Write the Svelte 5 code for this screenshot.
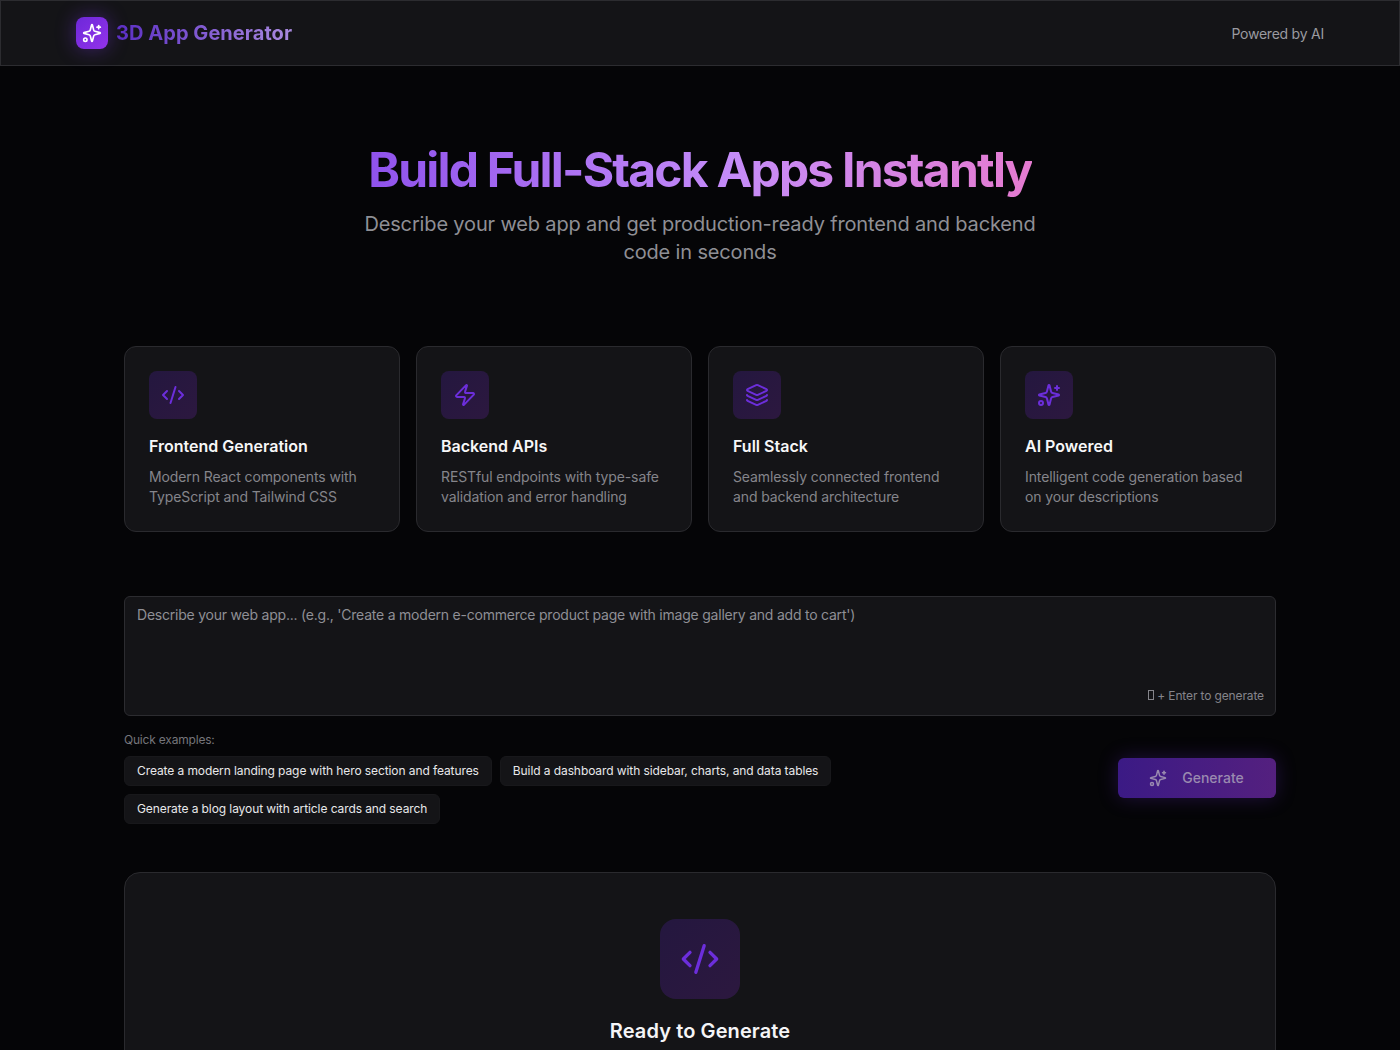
<script>
  const features = [
    { icon: 'code', title: 'Frontend Generation', text: ['Modern React components with', 'TypeScript and Tailwind CSS'] },
    { icon: 'zap', title: 'Backend APIs', text: ['RESTful endpoints with type-safe', 'validation and error handling'] },
    { icon: 'layers', title: 'Full Stack', text: ['Seamlessly connected frontend', 'and backend architecture'] },
    { icon: 'sparkles', title: 'AI Powered', text: ['Intelligent code generation based', 'on your descriptions'] },
  ]
  const examples = [
    'Create a modern landing page with hero section and features',
    'Build a dashboard with sidebar, charts, and data tables',
    'Generate a blog layout with article cards and search',
  ]
</script>

{#snippet icon(name, size)}
  <svg width={size} height={size} viewBox="0 0 24 24" fill="none" stroke="currentColor" stroke-width="2" stroke-linecap="round" stroke-linejoin="round">
    {#if name === 'code'}
      <path d="m18 16 4-4-4-4" /><path d="m6 8-4 4 4 4" /><path d="m14.5 4-5 16" />
    {:else if name === 'zap'}
      <path d="M4 14a1 1 0 0 1-.78-1.63l9.9-10.2a.5.5 0 0 1 .86.46l-1.92 6.02A1 1 0 0 0 13 10h7a1 1 0 0 1 .78 1.63l-9.9 10.2a.5.5 0 0 1-.86-.46l1.92-6.02A1 1 0 0 0 11 14z" />
    {:else if name === 'layers'}
      <path d="M12.83 2.18a2 2 0 0 0-1.66 0L2.6 6.08a1 1 0 0 0 0 1.83l8.58 3.91a2 2 0 0 0 1.66 0l8.58-3.9a1 1 0 0 0 0-1.83z" />
      <path d="M2 12a1 1 0 0 0 .58.91l8.6 3.91a2 2 0 0 0 1.65 0l8.58-3.9A1 1 0 0 0 22 12" />
      <path d="M2 17a1 1 0 0 0 .58.91l8.6 3.91a2 2 0 0 0 1.65 0l8.58-3.9A1 1 0 0 0 22 17" />
    {:else}
      <path d="M9.937 15.5A2 2 0 0 0 8.5 14.063l-6.135-1.582a.5.5 0 0 1 0-.962L8.5 9.936A2 2 0 0 0 9.937 8.5l1.582-6.135a.5.5 0 0 1 .963 0L14.063 8.5A2 2 0 0 0 15.5 9.937l6.135 1.581a.5.5 0 0 1 0 .964L15.5 14.063a2 2 0 0 0-1.437 1.437l-1.582 6.135a.5.5 0 0 1-.963 0z" />
      <path d="M20 3v4" /><path d="M22 5h-4" /><circle cx="4" cy="20" r="2" />
    {/if}
  </svg>
{/snippet}

<div class="page">
  <header class="topbar">
    <div class="topbar-inner">
      <div class="brand">
        <span class="brand-mark">{@render icon('sparkles', 20)}</span>
        <span class="brand-name">3D App Generator</span>
      </div>
      <span class="powered">Powered by AI</span>
    </div>
  </header>

  <main class="main">
    <section class="hero">
      <h1>Build Full-Stack Apps Instantly</h1>
      <p>Describe your web app and get production-ready frontend and backend code in seconds</p>
    </section>

    <section class="features">
      {#each features as f}
        <article class="feature">
          <span class="feature-icon">{@render icon(f.icon, 24)}</span>
          <h3>{f.title}</h3>
          <p>{f.text[0]}<br />{f.text[1]}</p>
        </article>
      {/each}
    </section>

    <section class="composer">
      <div class="prompt">
        <span class="placeholder">Describe your web app... (e.g., 'Create a modern e-commerce product page with image gallery and add to cart')</span>
        <span class="hint"><i class="tofu"></i> + Enter to generate</span>
      </div>
      <div class="composer-foot">
        <div class="quick">
          <div class="quick-label">Quick examples:</div>
          <div class="chips">
            {#each examples as ex}
              <button class="chip">{ex}</button>
            {/each}
          </div>
        </div>
        <button class="generate" disabled>
          {@render icon('sparkles', 18)}
          <span>Generate</span>
        </button>
      </div>
    </section>

    <section class="empty">
      <span class="empty-icon">{@render icon('code', 40)}</span>
      <h2>Ready to Generate</h2>
    </section>
  </main>
</div>

<style>
  :global(body) {
    margin: 0;
    background: #050507;
    overflow: hidden;
  }
  .page {
    height: 1050px;
    overflow: hidden;
    font-family: Inter, "Noto Sans", sans-serif;
    color: #f5f5f7;
    background: #050507;
  }
  .topbar {
    height: 66px;
    box-sizing: border-box;
    border: 1px solid #2c2c30;
    background: #141417;
  }
  .topbar-inner {
    max-width: 1248px;
    height: 100%;
    margin: 0 auto;
    display: flex;
    align-items: center;
    justify-content: space-between;
  }
  .brand { display: flex; align-items: center; gap: 8px; }
  .brand-mark {
    width: 32px;
    height: 32px;
    border-radius: 8px;
    display: flex;
    align-items: center;
    justify-content: center;
    color: #fff;
    background: linear-gradient(135deg, #6d28d9, #9333ea);
    box-shadow: 0 0 20px rgba(124, 58, 237, 0.4);
  }
  .brand-name {
    font-size: 20px;
    font-weight: 700;
    letter-spacing: 0.05px;
    background: linear-gradient(90deg, #5b2ec4, #a98adf);
    -webkit-background-clip: text;
    background-clip: text;
    color: transparent;
  }
  .powered { font-size: 14px; letter-spacing: -0.23px; color: #9a9aa0; }

  .main { width: 1152px; margin: 0 auto; }
  .hero { padding-top: 76px; text-align: center; }
  .hero h1 {
    margin: 0;
    font-size: 48px;
    line-height: 56px;
    font-weight: 700;
    letter-spacing: -1.8px;
    background: linear-gradient(90deg, #8f52ec, #c58cf8 55%, #e57bd0);
    -webkit-background-clip: text;
    background-clip: text;
    color: transparent;
    display: inline-block;
  }
  .hero p {
    width: 700px;
    margin: 12px auto 0;
    font-size: 20px;
    line-height: 28px;
    letter-spacing: -0.15px;
    color: #8f8f95;
  }

  .features {
    display: grid;
    grid-template-columns: repeat(4, 1fr);
    gap: 16px;
    margin-top: 80px;
  }
  .feature {
    height: 186px;
    box-sizing: border-box;
    padding: 24px;
    border: 1px solid #2a2a2e;
    border-radius: 12px;
    background: #141417;
  }
  .feature-icon {
    width: 48px;
    height: 48px;
    border-radius: 8px;
    display: flex;
    align-items: center;
    justify-content: center;
    color: #6c2edb;
    background: linear-gradient(135deg, #24173f, #2c183f);
  }
  .feature h3 {
    margin: 15px 0 9px;
    font-size: 16px;
    line-height: 24px;
    font-weight: 600;
    color: #f7f7f8;
  }
  .feature p {
    margin: 0;
    font-size: 14px;
    line-height: 20px;
    letter-spacing: -0.11px;
    color: #85858b;
  }

  .composer { margin-top: 64px; }
  .prompt {
    position: relative;
    height: 120px;
    box-sizing: border-box;
    padding: 8px 12px;
    border: 1px solid #2c2c30;
    border-radius: 6px;
    background: #141417;
    font-size: 14px;
    line-height: 20px;
    letter-spacing: -0.22px;
    color: #8f8f95;
  }
  .hint {
    position: absolute;
    right: 11px;
    bottom: 11px;
    font-size: 12px;
    line-height: 16px;
    letter-spacing: -0.13px;
    color: #85858b;
  }
  .tofu {
    display: inline-block;
    width: 4px;
    height: 8px;
    border: 1px solid #85858b;
  }
  .composer-foot {
    display: flex;
    justify-content: space-between;
    align-items: center;
    margin-top: 16px;
  }
  .quick { flex: 1; }
  .quick-label {
    font-size: 12px;
    line-height: 16px;
    letter-spacing: -0.2px;
    color: #75757b;
    margin-bottom: 8px;
  }
  .chips { display: flex; flex-wrap: wrap; gap: 8px; width: 960px; }
  .chip {
    height: 30px;
    padding: 0 12px 1px;
    border: 1px solid #18181b;
    border-radius: 6px;
    background: #141417;
    color: #e8e8ea;
    font-family: inherit;
    font-size: 12px;
    letter-spacing: -0.09px;
  }
  .generate {
    width: 158px;
    height: 40px;
    display: flex;
    align-items: center;
    justify-content: center;
    gap: 15px;
    padding: 0 1px 1px 0;
    border: 0;
    border-radius: 6px;
    color: #9a8ab0;
    background: linear-gradient(90deg, #3b1a85, #54207f);
    box-shadow: 0 0 20px rgba(110, 50, 220, 0.25);
    font-family: inherit;
    font-size: 14px;
    font-weight: 500;
  }

  .empty {
    margin-top: 48px;
    height: 400px;
    box-sizing: border-box;
    padding-top: 46px;
    border: 1px solid #2a2a2e;
    border-radius: 16px;
    background: #141417;
    display: flex;
    flex-direction: column;
    align-items: center;
  }
  .empty-icon {
    width: 80px;
    height: 80px;
    border-radius: 16px;
    display: flex;
    align-items: center;
    justify-content: center;
    color: #6c2edb;
    background: linear-gradient(135deg, #24173f, #2c183f);
  }
  .empty h2 {
    margin: 18px 0 0;
    font-size: 20px;
    line-height: 28px;
    font-weight: 600;
    letter-spacing: 0.1px;
    color: #f5f5f7;
  }
</style>
